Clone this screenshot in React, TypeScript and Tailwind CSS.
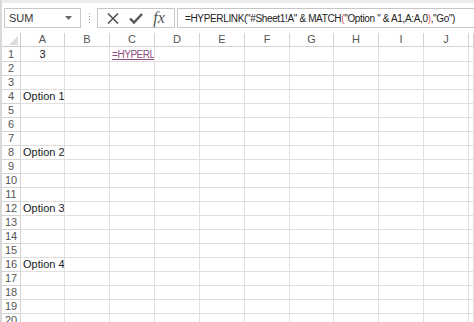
import React from "react";

const cols = ["A", "B", "C", "D", "E", "F", "G", "H", "I", "J", ""];
const gridCols =
  "grid grid-cols-[19px_44px_45px_45px_45px_45px_45px_44px_45px_45px_45px_1fr]";

const cellText: Record<string, React.ReactNode> = {
  "1-A": <span className="block text-center text-[#222]">3</span>,
  "1-C": (
    <span className="block pl-[2px] text-[10px] tracking-[-0.45px] text-[#8e4b80] underline underline-offset-1 whitespace-nowrap">
      =HYPERLINK
    </span>
  ),
  "4-A": <span className="block pl-[2px] text-[#222] whitespace-nowrap">Option 1</span>,
  "8-A": <span className="block pl-[2px] text-[#222] whitespace-nowrap">Option 2</span>,
  "12-A": <span className="block pl-[2px] text-[#222] whitespace-nowrap">Option 3</span>,
  "16-A": <span className="block pl-[2px] text-[#222] whitespace-nowrap">Option 4</span>,
};

export default function App() {
  const rows = Array.from({ length: 20 }, (_, i) => i + 1);
  return (
    <div
      className="w-[474px] h-[322px] overflow-hidden bg-white border-l-2 border-[#d9d9d9] flex flex-col"
      style={{ fontFamily: '"Liberation Sans", Arial, sans-serif' }}
    >
      {/* top strip */}
      <div className="h-[3px] bg-[#ececec] shrink-0" />
      {/* formula toolbar */}
      <div className="h-[30px] shrink-0 flex items-center pl-[2px]">
        <div className="w-[77px] shrink-0 h-[20px] border border-[#c6c6c6] flex items-center justify-between pl-[4px] pr-[8px]">
          <span className="text-[11px] text-[#333]">SUM</span>
          <svg width="7" height="4" viewBox="0 0 7 4">
            <path d="M0 0 L7 0 L3.5 4 Z" fill="#666" />
          </svg>
        </div>
        <div className="w-[16px] shrink-0 flex flex-col items-center gap-[2px]">
          <span className="w-[1px] h-[1px] bg-[#999]" />
          <span className="w-[1px] h-[1px] bg-[#999]" />
          <span className="w-[1px] h-[1px] bg-[#999]" />
          <span className="w-[1px] h-[1px] bg-[#999]" />
        </div>
        <div className="w-[78px] shrink-0 h-[20px] border border-[#c6c6c6] flex items-center justify-around px-[4px]">
          <svg width="12" height="11" viewBox="0 0 12 11">
            <path d="M1 0.5 L11 10.5 M11 0.5 L1 10.5" stroke="#555" strokeWidth="1.6" />
          </svg>
          <svg width="14" height="11" viewBox="0 0 14 11">
            <path d="M1 5.5 L5 9.5 L13 1" stroke="#555" strokeWidth="2.4" fill="none" />
          </svg>
          <span
            className="text-[16px] italic text-[#555] leading-none"
            style={{ fontFamily: '"Liberation Serif", "Times New Roman", serif' }}
          >
            fx
          </span>
        </div>
        <div className="ml-[2px] flex-1 min-w-0 overflow-hidden h-[20px] border border-r-0 border-[#c6c6c6] flex items-center pl-[7px] whitespace-nowrap text-[10px] text-[#222] tracking-[-0.35px]">
          =HYPERLINK("#Sheet1!A" &amp; MATCH<span className="text-[#e0544f]">(</span>"Option " &amp; A1,A:A,0<span className="text-[#e0544f]">)</span>,"Go")
        </div>
      </div>
      {/* header row */}
      <div className={`${gridCols} h-[14px] shrink-0 text-[11px] text-[#555] leading-[13px]`}>
        <div className="border-r border-b border-[#c9c9c9] relative">
          <svg className="absolute right-[2px] bottom-[1px]" width="9" height="9" viewBox="0 0 9 9">
            <path d="M9 0 L9 9 L0 9 Z" fill="#dcdcdc" />
          </svg>
        </div>
        {cols.map((c, i) => (
          <div key={i} className="border-r border-b border-[#d4d4d4] text-center">
            {c}
          </div>
        ))}
      </div>
      {rows.map((r) => (
        <div key={r} className={`${gridCols} h-[14px] shrink-0 text-[11px] leading-[13px]`}>
          <div className="border-r border-b border-[#d4d4d4] text-[#555] text-center pt-[1px]">{r}</div>
          {cols.map((c, i) => (
            <div key={i} className="border-r border-b border-[#e0e0e0] overflow-hidden pt-[1px]">
              {cellText[`${r}-${c}`] ?? null}
            </div>
          ))}
        </div>
      ))}
    </div>
  );
}
